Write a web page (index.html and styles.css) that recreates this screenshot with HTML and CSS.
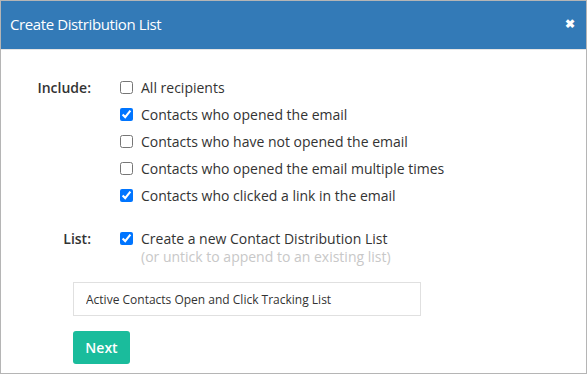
FILE: index.html
```html
<!DOCTYPE html>
<html lang="en">
<head>
    <meta charset="UTF-8">
    <meta name="viewport" content="width=device-width, initial-scale=1.0">
    <link rel="stylesheet" href="styles.css">
</head>
<body>

<div class="modal">
    <div class="modal-header">
        <span class="title">Create Distribution List</span>
        <span class="close">&#10006;</span>
    </div>

    <div class="modal-body">
        <div class="field">
            <div class="label">Include:</div>
            <div class="options">
                <label class="option"><input type="checkbox"> All recipients</label>
                <label class="option"><input type="checkbox" checked> Contacts who opened the email</label>
                <label class="option"><input type="checkbox"> Contacts who have not opened the email</label>
                <label class="option"><input type="checkbox"> Contacts who opened the email multiple times</label>
                <label class="option"><input type="checkbox" checked> Contacts who clicked a link in the email</label>
            </div>
        </div>

        <div class="field list-field">
            <div class="label">List:</div>
            <div class="options">
                <label class="option"><input type="checkbox" checked> Create a new Contact Distribution List</label>
                <div class="hint">(or untick to append to an existing list)</div>
            </div>
        </div>

        <input class="list-name" type="text" value="Active Contacts Open and Click Tracking List">

        <button class="btn">Next</button>
    </div>
</div>

</body>
</html>
```

FILE: styles.css
```css
html, body {
    margin: 0;
    padding: 0;
}

body {
    font-family: "Open Sans", Arial, sans-serif;
    color: #333;
    background: #fff;
}

.modal {
    width: 587px;
    height: 374px;
    box-sizing: border-box;
    border: 1px solid #b5b5b5;
    overflow: hidden;
}

.modal-header {
    height: 48px;
    background-color: #337ab7;
    border-bottom: 1px solid #e5e5e5;
    display: flex;
    align-items: center;
    justify-content: space-between;
    padding: 0 11px 0 9px;
    color: #fff;
}

.title {
    font-size: 15px;
    letter-spacing: -0.4px;
    margin-top: -2px;
}

.close {
    font-size: 12px;
    font-weight: bold;
    margin-top: -4px;
}

.modal-body {
    padding-top: 24px;
    display: flex;
    flex-direction: column;
    align-items: flex-start;
}

.field {
    display: grid;
    grid-template-columns: 90px 1fr;
    column-gap: 29px;
    font-size: 14px;
}

.list-field {
    margin-top: 16px;
}

.label {
    text-align: right;
    font-weight: 600;
    line-height: 27px;
}

.options {
    display: flex;
    flex-direction: column;
}

.option {
    display: flex;
    align-items: center;
    line-height: 27px;
    color: #333;
}

.option input {
    width: 13px;
    height: 13px;
    margin: 0 8px 0 0;
    accent-color: #0075ff;
}

.hint {
    color: #c8c8c8;
    padding-left: 21px;
    line-height: 12px;
    margin-top: -1px;
}

.list-name {
    margin: 19px 0 0 72px;
    width: 348px;
    height: 34px;
    box-sizing: border-box;
    border: 1px solid #e0e0e0;
    padding: 0 12px;
    font-family: "Open Sans", Arial, sans-serif;
    font-size: 12px;
    color: #333;
    outline: none;
}

.btn {
    margin: 15px 0 0 72px;
    width: 57px;
    height: 33px;
    border: none;
    border-radius: 3px;
    background-color: #1abc9c;
    color: #fff;
    font-family: "Open Sans", Arial, sans-serif;
    font-size: 14px;
    font-weight: 600;
    cursor: pointer;
}
```
